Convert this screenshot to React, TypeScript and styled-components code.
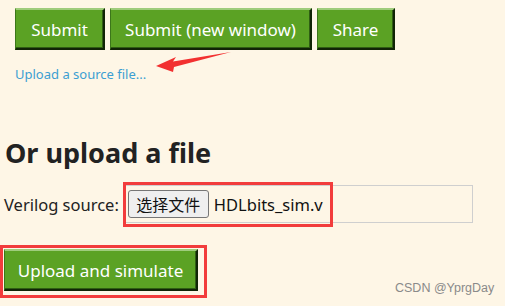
import React from "react";
import styled, { createGlobalStyle } from "styled-components";

const Global = createGlobalStyle`
  html, body { margin: 0; padding: 0; background: #fef6e6; }
  body { font-family: "Noto Sans", "Open Sans", sans-serif; color: #222; }
`;

const Page = styled.div`
  position: relative;
  width: 505px;
  height: 306px;
  overflow: hidden;
  padding: 8px 0 0 4px;
  box-sizing: border-box;
`;

const ButtonRow = styled.div`
  display: flex;
  gap: 5px;
  margin-left: 11px;
`;

const GreenButton = styled.button<{ $w: number }>`
  box-sizing: border-box;
  width: ${(p) => p.$w}px;
  height: 42px;
  padding: 0;
  background: #5ba224;
  color: #fff;
  font-family: "Noto Sans", "Open Sans", sans-serif;
  font-size: 17px;
  border-style: solid;
  border-width: 2px 2px 2px 1px;
  border-color: #9fcc7c #112506 #112506 #3c761a;
  box-shadow: inset -1px -1px 0 #2f5e13;
  cursor: pointer;
`;

const LinkRow = styled.div`
  position: relative;
  margin: 12px 0 0 11px;
  height: 20px;
`;

const SourceLink = styled.a`
  font-size: 13px;
  color: #3c9fd2;
  text-decoration: none;
`;

const Arrow = styled.svg`
  position: absolute;
  left: 0;
  top: -12px;
  overflow: visible;
`;

const Heading = styled.h2`
  margin: 56px 0 0 1px;
  font-size: 27px;
  font-weight: 700;
  line-height: 30px;
  color: #222;
`;

const FieldRow = styled.div`
  display: flex;
  align-items: center;
  margin-top: 17px;
  gap: 5px;
`;

const Label = styled.span`
  font-size: 16.5px;
`;

const FileBoxWrap = styled.div`
  position: relative;
`;

const FileBox = styled.div`
  box-sizing: border-box;
  width: 349px;
  height: 38px;
  border: 1px solid #cfcfcf;
  display: flex;
  align-items: center;
  padding-left: 3px;
  gap: 5px;
`;

const ChooseButton = styled.span`
  box-sizing: border-box;
  height: 28px;
  width: 81px;
  display: flex;
  align-items: center;
  justify-content: center;
  background: #efefef;
  border: 1px solid #767676;
  border-radius: 3px;
  font-family: "Noto Sans CJK SC", sans-serif;
  font-size: 16px;
  color: #111;
`;

const FileName = styled.span`
  font-size: 16.5px;
  color: #111;
`;

const RedFrame = styled.div<{ $l: number; $t: number; $w: number; $h: number }>`
  position: absolute;
  left: ${(p) => p.$l}px;
  top: ${(p) => p.$t}px;
  width: ${(p) => p.$w}px;
  height: ${(p) => p.$h}px;
  box-sizing: border-box;
  border: 3px solid #f23c3c;
  pointer-events: none;
`;

const UploadFrame = styled.div`
  box-sizing: border-box;
  width: 207px;
  height: 53px;
  margin: 22px 0 0 -4px;
  border: 3px solid #f23c3c;
  padding: 1px 0 0 1px;
`;

const Watermark = styled.div`
  position: absolute;
  left: 395px;
  top: 281px;
  font-family: "Liberation Sans", Arial, sans-serif;
  font-size: 12.5px;
  color: #8a8a8a;
`;

export default function App() {
  return (
    <>
      <Global />
      <Page>
        <ButtonRow>
          <GreenButton $w={90}>Submit</GreenButton>
          <GreenButton $w={202}>Submit (new window)</GreenButton>
          <GreenButton $w={78}>Share</GreenButton>
        </ButtonRow>
        <LinkRow>
          <SourceLink href="#">Upload a source file...</SourceLink>
          <Arrow width="1" height="1" viewBox="0 0 1 1">
            <g transform="translate(-15,-58)">
              <polygon
                points="156,74 176,65 173,69.5 231,60 174,75 173,80"
                fill="#f23030"
              />
            </g>
          </Arrow>
        </LinkRow>
        <Heading>Or upload a file</Heading>
        <FieldRow>
          <Label>Verilog source:</Label>
          <FileBoxWrap>
            <FileBox>
              <ChooseButton>选择文件</ChooseButton>
              <FileName>HDLbits_sim.v</FileName>
            </FileBox>
            <RedFrame $l={-1} $t={-3} $w={210} $h={45} />
          </FileBoxWrap>
        </FieldRow>
        <UploadFrame>
          <GreenButton $w={194}>Upload and simulate</GreenButton>
        </UploadFrame>
        <Watermark>CSDN @YprgDay</Watermark>
      </Page>
    </>
  );
}
